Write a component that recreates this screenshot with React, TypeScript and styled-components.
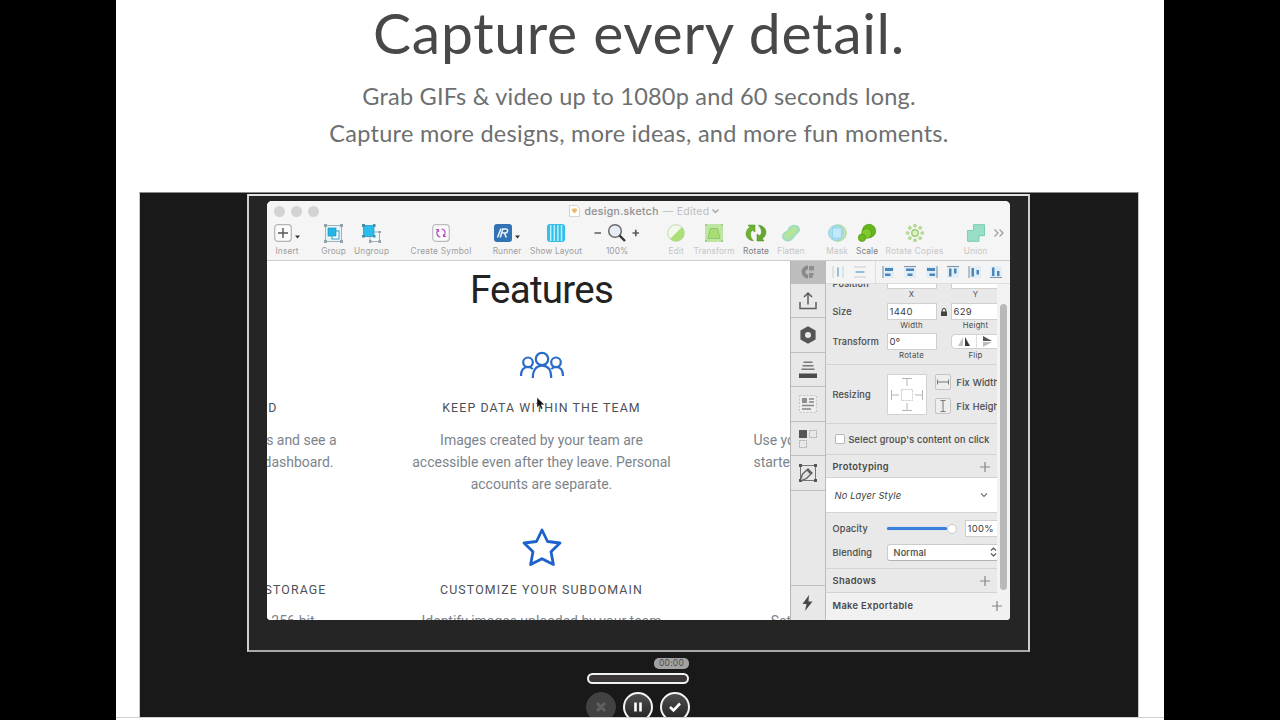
import React from "react";
import styled, { createGlobalStyle } from "styled-components";

const GlobalStyle = createGlobalStyle`
  * { box-sizing: border-box; }
  body { margin: 0; background: #000; overflow: hidden; }
  svg { display: block; flex: none; overflow: visible; }
`;

/* ---------- page ---------- */

const Page = styled.div`
  height: 720px;
  width: 1280px;
  display: flex;
  justify-content: center;
  background: #000;
`;
const Stage = styled.main`
  width: 1048px;
  height: 720px;
  overflow: hidden;
  background: #fff;
  display: flex;
  flex-direction: column;
`;
const Hero = styled.header`
  height: 192px;
  flex: none;
  padding-right: 2px;
  text-align: center;
  font-family: Lato, "Liberation Sans", sans-serif;
  white-space: nowrap;
`;
const Headline = styled.h1`
  margin: 0;
  height: 78px;
  font-size: 57px;
  line-height: 64px;
  font-weight: 400;
  letter-spacing: 0.7px;
  color: #484848;
`;
const Lead = styled.p<{ $track: number }>`
  margin: 0;
  font-size: 23.5px;
  line-height: 37px;
  letter-spacing: ${(p) => p.$track}px;
  color: #6d6f70;
`;
const Band = styled.div`
  height: 526px;
  flex: none;
  padding-right: 2px;
  border-bottom: 1px solid #cfcfcf;
  display: flex;
  justify-content: center;
`;
const Recorder = styled.section`
  width: 1000px;
  height: 525px;
  padding-right: 2px;
  flex: none;
  overflow: hidden;
  background: #191919;
  border: 1px solid #c8c8c8;
  border-top: 1px solid #8a8a8a;
  border-bottom: 0;
  display: flex;
  flex-direction: column;
  align-items: center;
`;
const CaptureFrame = styled.div`
  width: 783px;
  height: 458px;
  margin-top: 1px;
  flex: none;
  border: 2px solid #cfcfcf;
  border-top-color: #e4e4e4;
  border-bottom-color: #a8a8a8;
  background: #252525;
  padding: 5px 18px;
`;
const AppWindow = styled.div`
  width: 743px;
  height: 419px;
  border-radius: 5px 5px 4px 4px;
  overflow: hidden;
  background: #fff;
  display: flex;
  flex-direction: column;
  font-family: Inter, "Liberation Sans", sans-serif;
  white-space: nowrap;
`;

/* ---------- window chrome ---------- */

const Chrome = styled.div`
  height: 60px;
  flex: none;
  background: #f5f5f5;
  border-bottom: 1px solid #cdcdcd;
`;
const TitleBar = styled.div`
  height: 20px;
  display: flex;
  align-items: center;
  padding-left: 7px;
`;
const Lights = styled.div`
  display: flex;
  gap: 6px;
  width: 295px;
`;
const Light = styled.i`
  width: 11px;
  height: 11px;
  border-radius: 50%;
  background: #d3d3d3;
`;
const FileName = styled.span`
  font-size: 10.5px;
  margin: 0 4px 0 5px;
  letter-spacing: 0.4px;
  color: #8e8e8e;
  -webkit-text-stroke: 0.2px #8e8e8e;
`;
const Edited = styled.span`
  font-size: 10.5px;
  color: #bdbdbd;
  letter-spacing: 0.25px;
  margin-right: 3px;
`;
const Tools = styled.div`
  display: flex;
  height: 39px;
`;
const Tool = styled.div<{ $w: number; $gap: number; $dim?: boolean; $dark?: boolean }>`
  width: ${(p) => p.$w}px;
  margin-left: ${(p) => p.$gap}px;
  flex: none;
  display: flex;
  flex-direction: column;
  align-items: center;
  color: ${(p) => (p.$dim ? "#c6c6c6" : p.$dark ? "#7d7d7d" : "#9d9d9d")};
`;
const ToolIcon = styled.div`
  height: 24px;
  display: flex;
  align-items: center;
  justify-content: center;
  gap: 3px;
`;
const ToolLabel = styled.span<{ $track: number }>`
  font-size: 8.3px;
  line-height: 10px;
  margin-top: 0.6px;
  letter-spacing: ${(p) => p.$track}px;
`;

/* ---------- canvas ---------- */

const Workspace = styled.div`
  flex: 1;
  min-height: 0;
  display: flex;
`;
const Canvas = styled.div`
  width: 523px;
  height: 359px;
  overflow: hidden;
  background: #fff;
  display: grid;
  grid-template-columns: 101px 348px 74px;
  font-family: Roboto, "Liberation Sans", sans-serif;
  flex: none;
  position: relative;
`;
const Column = styled.div<{ $align: string; $pad?: number }>`
  display: flex;
  flex-direction: column;
  align-items: ${(p) => p.$align};
  padding-left: ${(p) => p.$pad ?? 0}px;
  min-width: 0;
`;
const FeatureTitle = styled.h2`
  margin: 0;
  font-weight: 400;
  font-size: 38.5px;
  line-height: 57px;
  height: 90px;
  letter-spacing: -0.75px;
  color: #222;
`;
const Glyph = styled.div<{ $h: number }>`
  height: ${(p) => p.$h}px;
  flex: none;
`;
const Caps = styled.h3<{ $shift?: number }>`
  margin: 0 ${(p) => p.$shift ?? 0}px 0 0;
  height: 20px;
  flex: none;
  font-weight: 400;
  font-size: 12.4px;
  line-height: 20px;
  letter-spacing: 1.1px;
  color: #4c5156;
`;
const Copy = styled.p<{ $shift?: number }>`
  margin: 0 ${(p) => p.$shift ?? 0}px 0 0;
  height: 22.4px;
  flex: none;
  font-size: 14px;
  line-height: 22.4px;
  letter-spacing: -0.02px;
  color: #7c848b;
`;
const Space = styled.div<{ $h: number }>`
  height: ${(p) => p.$h}px;
  flex: none;
`;
const Pointer = styled.div`
  position: absolute;
  left: 269px;
  top: 136px;
`;

/* ---------- icon rail ---------- */

const Rail = styled.div`
  width: 36px;
  flex: none;
  background: #e8e8e8;
  border-left: 1px solid #b5b5b5;
  border-right: 1px solid #bcbcbc;
  display: flex;
  flex-direction: column;
`;
const RailCell = styled.div<{ $h: number; $active?: boolean; $last?: boolean }>`
  height: ${(p) => p.$h}px;
  flex: none;
  display: flex;
  align-items: center;
  justify-content: center;
  background: ${(p) => (p.$active ? "#bdbdbd" : "transparent")};
  border-bottom: ${(p) => (p.$last ? "0" : "1px solid #bfbfbf")};
`;
const RailGap = styled.div`
  flex: 1;
  border-bottom: 1px solid #bfbfbf;
`;

/* ---------- inspector ---------- */

const Inspector = styled.div`
  flex: 1;
  min-width: 0;
  display: flex;
  flex-direction: column;
  background: #e9e9e9;
`;
const AlignBar = styled.div`
  height: 23px;
  flex: none;
  display: flex;
  align-items: center;
  padding-left: 6px;
  background: #f4f4f4;
  border-bottom: 1px solid #dcdcdc;
`;
const AlignSlot = styled.div<{ $w: number; $line?: boolean }>`
  width: ${(p) => p.$w}px;
  height: 100%;
  flex: none;
  display: flex;
  align-items: center;
  border-right: ${(p) => (p.$line ? "1px solid #dedede" : "0")};
`;
const ScrollArea = styled.div`
  height: 309px;
  flex: none;
  display: flex;
`;
const Fields = styled.div`
  width: 171px;
  overflow: hidden;
  flex: none;
`;
const Track = styled.div`
  flex: 1;
  background: #f3f3f3;
  padding: 20px 0 3px 3px;
  display: flex;
`;
const Thumb = styled.div`
  width: 7px;
  border-radius: 4px;
  background: #b9b9b9;
`;
const Group = styled.div<{ $h: number; $white?: boolean }>`
  height: ${(p) => p.$h}px;
  width: 190px;
  background: ${(p) => (p.$white ? "#fff" : "transparent")};
  border-bottom: 1px solid #d3d3d3;
`;
const Row = styled.div<{ $h: number; $end?: boolean }>`
  height: ${(p) => p.$h}px;
  display: flex;
  align-items: ${(p) => (p.$end ? "flex-end" : "center")};
  padding-left: 6px;
`;
const Label = styled.span<{ $w: number }>`
  width: ${(p) => p.$w}px;
  flex: none;
  padding-left: 1px;
  font-size: 9.2px;
  letter-spacing: 0.22px;
  color: #484848;
  -webkit-text-stroke: 0.2px #484848;
`;
const Field = styled.span<{ $w: number }>`
  width: ${(p) => p.$w}px;
  height: 17px;
  flex: none;
  background: #fff;
  border: 1px solid #cfcfcf;
  padding-left: 2px;
  font-size: 9.5px;
  line-height: 16px;
  letter-spacing: 0.3px;
  color: #3c3c3c;
`;
const Captions = styled.div<{ $h: number }>`
  height: ${(p) => p.$h}px;
  display: grid;
  grid-template-columns: 50px 50px;
  column-gap: 14px;
  padding-left: 61px;
  font-size: 7.8px;
  line-height: 11px;
  letter-spacing: 0.2px;
  text-align: center;
  color: #4a4a4a;
`;
const Lock = styled.span`
  width: 14px;
  display: flex;
  justify-content: center;
`;
const FlipButton = styled.span`
  width: 60px;
  height: 15px;
  border-radius: 4px;
  background: #fff;
  border: 1px solid #d0d0d0;
  display: flex;
  align-items: center;
  padding-left: 6px;
  gap: 6px;
`;
const FlipRule = styled.i`
  width: 1px;
  height: 13px;
  background: #ddd;
`;
const ResizeRow = styled.div`
  height: 58px;
  display: flex;
  align-items: center;
  padding-left: 6px;
`;
const ResizeBox = styled.div`
  width: 40px;
  height: 41px;
  background: #fff;
  border: 1px solid #d2d2d2;
`;
const FixList = styled.div`
  margin-left: 8px;
  display: flex;
  flex-direction: column;
  gap: 8px;
`;
const FixItem = styled.div`
  display: flex;
  align-items: center;
  height: 16px;
  gap: 5px;
`;
const FixIcon = styled.span`
  width: 16px;
  height: 16px;
  border: 1px solid #c4c4c4;
  border-radius: 2px;
  background: #eee;
`;
const Check = styled.span`
  width: 10px;
  height: 10px;
  margin: 0 3px 0 3px;
  background: #fff;
  border: 1px solid #b5b5b5;
  border-radius: 2px;
`;
const Heading = styled.span<{ $w: number }>`
  width: ${(p) => p.$w}px;
  flex: none;
  padding-left: 1px;
  font-size: 9.3px;
  font-weight: 600;
  letter-spacing: 0.35px;
  color: #484848;
`;
const LayerStyle = styled.span`
  width: 148px;
  padding-left: 3px;
  font-size: 9.3px;
  font-style: italic;
  letter-spacing: 0.15px;
  color: #3e3e3e;
`;
const Slider = styled.div`
  width: 70px;
  display: flex;
  align-items: center;
  margin-right: 8px;
`;
const SliderBar = styled.i`
  width: 60px;
  height: 2.6px;
  border-radius: 2px;
  background: #3b7fdb;
  box-shadow: 0 0 1px #6fb0f5;
`;
const Knob = styled.i`
  width: 10px;
  height: 10px;
  border-radius: 50%;
  background: #fff;
  border: 1px solid #c9c9c9;
`;
const Select = styled.div`
  width: 112px;
  height: 17px;
  border-radius: 3px;
  background: #fff;
  border: 1px solid #cbcbcb;
  border-bottom-color: #b4b4b4;
  display: flex;
  align-items: center;
  padding-left: 5px;
`;
const ExportRow = styled.div`
  flex: 1;
  display: flex;
  align-items: center;
  padding: 0 0 2px 6px;
  background: #f1f1f1;
`;

/* ---------- recorder controls ---------- */

const Controls = styled.div`
  width: 102px;
  display: flex;
  flex-direction: column;
  align-items: flex-end;
  padding-top: 6px;
`;
const Timer = styled.span`
  width: 35px;
  height: 11px;
  border-radius: 5px;
  background: #a2a2a2;
  color: #4e4e4e;
  font: 8.5px/11px Inter, sans-serif;
  letter-spacing: 0.2px;
  text-align: center;
`;
const Progress = styled.div`
  width: 102px;
  height: 11px;
  margin: 4px 0 8px;
  border: 2px solid #f1f1f1;
  border-radius: 6px;
  background: #3a3536;
  flex: none;
`;
const Buttons = styled.div`
  display: flex;
  gap: 7px;
  margin-right: -1px;
`;
const RoundButton = styled.div<{ $off?: boolean }>`
  width: 30px;
  height: 30px;
  flex: none;
  border-radius: 50%;
  border: ${(p) => (p.$off ? "1px solid #444" : "2px solid #f4f4f4")};
  background: ${(p) => (p.$off ? "#424242" : "linear-gradient(#4e4e4e, #232323)")};
  display: flex;
  align-items: center;
  justify-content: center;
`;

/* ---------- drawings ---------- */

const Caret = () => (
  <svg width="5" height="14" viewBox="0 0 5 14">
    <path d="M0 9.500h5L2.500 12.600z" fill="#333" />
  </svg>
);

const icons: Record<string, React.ReactNode> = {
  insert: (
    <>
      <svg width="18" height="18" viewBox="0 0 18 18">
        <rect x="0.7" y="0.7" width="16.6" height="16.6" rx="3" fill="#fbfbfb" stroke="#b4b4b4" strokeWidth="1.2" />
        <path d="M4 9h10M9 4v10" stroke="#555" strokeWidth="1.4" />
      </svg>
      <Caret />
    </>
  ),
  group: (
    <svg width="19" height="19" viewBox="0 0 19 19">
      <rect x="1.5" y="1.5" width="16" height="16" fill="#e6f4f8" stroke="#9fb0b8" />
      <rect x="8" y="7" width="7" height="8" fill="#f5fdff" stroke="#3ba0c8" />
      <rect x="4" y="4" width="8" height="8" fill="#25b5e4" stroke="#1590bd" strokeWidth="0.6" />
      <path d="M0 0h3v3H0zM16 0h3v3h-3zM0 16h3v3H0zM16 16h3v3h-3z" fill="#93a1a8" />
    </svg>
  ),
  ungroup: (
    <svg width="19" height="19" viewBox="0 0 19 19">
      <rect x="8" y="8" width="9.5" height="9.5" fill="#f1f8fa" stroke="#a5afb5" />
      <path d="M7 16h2.5v3H7zM16.500 16H19v3h-2.500zM16.500 7H19v2h-2.500z" fill="#93a1a8" />
      <rect x="1.5" y="1.500" width="10.500" height="11" fill="#2cbce9" stroke="#1d9cc8" strokeWidth="0.800" />
      <path d="M0 0h3v3H0zM11 0h2.500v3H11zM0 11h3v2.500H0zM11 11h2.500v2.500H11z" fill="#4b8da6" />
    </svg>
  ),
  symbol: (
    <svg width="18" height="18" viewBox="0 0 18 18">
      <rect x="0.7" y="0.7" width="16.600" height="16.600" rx="3" fill="#fbfbfb" stroke="#bcbcbc" strokeWidth="1.200" />
      <path d="M8.500 13C4.500 12.500 4 8 6 5.500M3.800 5.500h2.700V8M9.500 5c4 .5 4.500 5 2.500 7.500M14.200 12.500h-2.700V10" fill="none" stroke="#bb52c4" strokeWidth="1.200" />
    </svg>
  ),
  runner: (
    <>
      <svg width="18" height="18" viewBox="0 0 18 18">
        <rect width="18" height="18" rx="3" fill="#3173b4" />
        <path d="M3.500 13.500L7 4.500M6.300 13.500L8.800 5H12c2.600 0 2 4-.8 4H8.500M10.500 9l1.800 4.500" fill="none" stroke="#eef5fc" strokeWidth="1.500" />
      </svg>
      <Caret />
    </>
  ),
  layout: (
    <svg width="18" height="18" viewBox="0 0 18 18">
      <rect width="18" height="18" rx="3" fill="#35bfe6" />
      <path d="M3.700 1v16M7.300 1v16M10.900 1v16M14.500 1v16" stroke="#b9efff" strokeWidth="1.500" />
    </svg>
  ),
  zoom: (
    <svg width="46" height="18" viewBox="0 0 46 18">
      <path d="M0.500 9h6.500M38.500 9h6.500M41.800 5.800v6.400" stroke="#5c5c5c" strokeWidth="1.700" />
      <circle cx="21" cy="7" r="6.300" fill="#e7edf8" stroke="#6b6b6b" strokeWidth="1.500" />
      <path d="M25.500 11.500l5.500 5.500" stroke="#333" strokeWidth="2.400" />
    </svg>
  ),
  edit: (
    <svg width="18" height="18" viewBox="0 0 18 18">
      <circle cx="9" cy="9" r="8.300" fill="#f2f8ea" stroke="#c3d9b4" />
      <path d="M15 3A8.400 8.400 0 0 1 3 15z" fill="#abdf78" />
    </svg>
  ),
  transform: (
    <svg width="18" height="18" viewBox="0 0 18 18">
      <rect width="18" height="18" rx="1" fill="#bfe6a0" />
      <path d="M5.500 4.500h7l2.500 10H3z" fill="#a9dc72" stroke="#8fc672" />
      <path d="M0 0h2v2H0zM16 0h2v2h-2zM0 16h2v2H0zM16 16h2v2h-2z" fill="#a5c897" />
    </svg>
  ),
  rotate: (
    <svg width="22" height="18" viewBox="0 0 22 18">
      <path d="M3 1h7v7L7.400 6.200C4.500 8.500 5 13 8.500 16.800 1.500 16.500-2 8.500 4.600 3.200z" fill="#6fb22f" stroke="#4f9527" strokeWidth="0.500" />
      <path d="M19 17h-7v-7l2.600 1.800C17.500 9.500 17 5 13.500 1.200c7 .3 10.500 8.300 3.900 13.600z" fill="#62a82d" stroke="#4a8c23" strokeWidth="0.500" />
    </svg>
  ),
  flatten: (
    <svg width="18" height="18" viewBox="0 0 18 18">
      <path d="M6 5.500C8 0 17 0 17.500 5c.3 3-2 4-4 6-2 3-4 6.500-8.500 6-5-.5-6-6-2.500-8.500C4.500 7.500 5.500 7 6 5.500z" fill="#a3dfc0" stroke="#88cfa9" strokeWidth="0.600" />
      <path d="M5 12.500C5.500 8 11 10.500 12.500 5" fill="none" stroke="#b9e58f" strokeWidth="4.500" strokeLinecap="round" />
    </svg>
  ),
  mask: (
    <svg width="19" height="18" viewBox="0 0 19 18">
      <circle cx="10" cy="9" r="8.300" fill="#bfe6b1" stroke="#9fd491" strokeWidth="0.800" />
      <circle cx="8" cy="9" r="7.600" fill="#a7dcf0" fillOpacity="0.850" stroke="#8ecde5" strokeWidth="0.700" />
      <rect x="4.500" y="4" width="9" height="10" fill="#c0e9fb" stroke="#84c8e6" strokeWidth="0.600" />
    </svg>
  ),
  scale: (
    <svg width="18" height="18" viewBox="0 0 18 18">
      <circle cx="11" cy="7" r="6.700" fill="#67b51c" stroke="#4c9612" strokeWidth="0.700" />
      <circle cx="8.500" cy="9.500" r="4.900" fill="#7fca2c" stroke="#4f9a14" strokeWidth="0.700" />
      <circle cx="4" cy="13.800" r="3.700" fill="#6cbb20" stroke="#4f9a14" strokeWidth="0.700" />
    </svg>
  ),
  copies: (
    <svg width="18" height="18" viewBox="0 0 18 18">
      <circle cx="9" cy="9" r="3.200" fill="#dff2c6" stroke="#9ccb72" strokeWidth="1.400" />
      {[0, 45, 90, 135, 180, 225, 270, 315].map((a) => (
        <circle key={a} cx="9" cy="1.700" r="1.600" fill="#b5dd8f" stroke="#9ccb72" strokeWidth="0.400" transform={`rotate(${a} 9 9)`} />
      ))}
    </svg>
  ),
  union: (
    <svg width="18" height="18" viewBox="0 0 18 18">
      <path d="M6.500 0.700h11v11h-5.500v5.600H0.600V6.500h5.900z" fill="#97dfc6" stroke="#78ceb2" />
    </svg>
  ),
};

type ToolSpec = [icon: string, label: string, w: number, gap: number, tone: string, track: number];
const tools: ToolSpec[] = [
  ["insert", "Insert", 28, 6.6, "", 0.15],
  ["group", "Group", 30, 17.5, "", 0.1],
  ["ungroup", "Ungroup", 40, 3, "", 0.15],
  ["symbol", "Create Symbol", 66, 16.5, "", 0.25],
  ["runner", "Runner", 32, 17, "", 0.15],
  ["layout", "Show Layout", 56, 5, "", 0.15],
  ["zoom", "100%", 48, 9, "", 0.1],
  ["edit", "Edit", 20, 25, "dim", 0.15],
  ["transform", "Transform", 44, 6, "dim", 0.1],
  ["rotate", "Rotate", 32, 4, "dark", 0.15],
  ["flatten", "Flatten", 32, 3, "dim", 0.15],
  ["mask", "Mask", 24, 18, "dim", 0.15],
  ["scale", "Scale", 26, 5, "dark", 0.1],
  ["copies", "Rotate Copies", 62, 3.5, "dim", 0.25],
  ["union", "Union", 28, 16, "dim", 0.1],
];

const alignShapes: [string, string, number][] = [
  ["M1 0v12", "M3 2h8v3H3zM3 7.500h5.500v2.500H3z", 22],
  ["M0 0.500h12", "M2 2.500h8v2.500H2zM3.500 7.500h5v2.500h-5z", 22],
  ["M11 0v12", "M1 2h8v3H1zM3.500 7.500h5.500v2.500H3.500z", 21],
  ["M0 0.500h12", "M2 2.500h2.500v8H2zM7 2.500h2.500v5H7z", 21.5],
  ["M0 0v12", "M2.500 2h2.500v8.500H2.500zM7.500 4h2.500v4.500H7.500z", 21.5],
  ["M0 11.500h12", "M2 1.500h2.500v8.500H2zM7 5h2.500v5H7z", 14],
];

const Plus = () => (
  <svg width="10" height="10" viewBox="0 0 10 10">
    <path d="M0 5h10M5 0v10" stroke="#858585" strokeWidth="1.200" />
  </svg>
);

const rail: [number, React.ReactNode][] = [
  [34, (
    <svg width="18" height="18" viewBox="0 0 18 18" fill="none" stroke="#5c5c5c" strokeWidth="1.500">
      <path d="M1 10v6.500h16V10M9 12.500V1M5 5l4-4 4 4" />
    </svg>
  )],
  [35, (
    <svg width="18" height="18" viewBox="0 0 18 18">
      <path d="M9 0.300l7.600 4.300v8.800L9 17.700 1.400 13.400V4.600zM9 6a3 3 0 1 0 0 6 3 3 0 0 0 0-6z" fill="#555" fillRule="evenodd" />
    </svg>
  )],
  [34, (
    <svg width="18" height="18" viewBox="0 0 18 18">
      <path d="M4.500 1.200h9M3.500 4.700h11M2.500 8.200h13" stroke="#777" strokeWidth="1.500" />
      <rect y="12.500" width="18" height="4.500" fill="#4a4a4a" />
    </svg>
  )],
  [35, (
    <svg width="18" height="18" viewBox="0 0 18 18">
      <rect x="0.500" y="0.500" width="17" height="17" fill="#ededed" stroke="#c4c4c4" strokeDasharray="2 1.500" />
      <path d="M3 3h5v5H3z" fill="#8e8e8e" />
      <path d="M10 4h5M10 7h5M3 10.500h12M3 14h9" stroke="#888" strokeWidth="1.300" />
    </svg>
  )],
  [34, (
    <svg width="18" height="18" viewBox="0 0 18 18">
      <rect width="8" height="8" fill="#555" />
      <path d="M10.500 0.500h7v7h-7zM0.500 10.500h7v7h-7z" fill="none" stroke="#aaa" strokeDasharray="2 1" />
    </svg>
  )],
  [35, (
    <svg width="18" height="18" viewBox="0 0 18 18">
      <path d="M1.500 1.500h15v15h-15z" fill="none" stroke="#777" />
      <path d="M0 0h3v3H0zM15 0h3v3h-3zM0 15h3v3H0zM15 15h3v3h-3z" fill="#555" />
      <path d="M1 17l2.500-7 5.500-5 4 4-5.500 5.500z M8 6l4 4" fill="#e0e0e0" stroke="#5c5c5c" strokeWidth="1.300" />
    </svg>
  )],
];

export default function App() {
  return (
    <Page>
      <GlobalStyle />
      <Stage>
        <Hero>
          <Headline>Capture every detail.</Headline>
          <Lead $track={0.2}>Grab GIFs &amp; video up to 1080p and 60 seconds long.</Lead>
          <Lead $track={0.27}>Capture more designs, more ideas, and more fun moments.</Lead>
        </Hero>
        <Band>
          <Recorder>
            <CaptureFrame>
              <AppWindow>
                <Chrome>
                  <TitleBar>
                    <Lights>
                      <Light />
                      <Light />
                      <Light />
                    </Lights>
                    <svg width="11" height="12" viewBox="0 0 11 12">
                      <path d="M0.500 0.500h7l3 3v8h-10z" fill="#fff" stroke="#d5d5d5" />
                      <path d="M2.500 5l1.500-1.500h3L8.500 5l-3 3.500z" fill="#e9b765" />
                    </svg>
                    <FileName>design.sketch</FileName>
                    <Edited>— Edited</Edited>
                    <svg width="7" height="5" viewBox="0 0 7 5">
                      <path d="M0.500 0.500l3 3 3-3" fill="none" stroke="#a5a5a5" strokeWidth="1.300" />
                    </svg>
                  </TitleBar>
                  <Tools>
                    {tools.map(([icon, label, w, gap, tone, track]) => (
                      <Tool key={label} $w={w} $gap={gap} $dim={tone === "dim"} $dark={tone === "dark"}>
                        <ToolIcon>{icons[icon]}</ToolIcon>
                        <ToolLabel $track={track}>{label}</ToolLabel>
                      </Tool>
                    ))}
                    <Tool $w={11} $gap={4}>
                      <ToolIcon>
                        <svg width="10" height="8" viewBox="0 0 10 8">
                          <path d="M0.500 0.500L4 4 0.500 7.500M5.500 0.500L9 4 5.500 7.500" fill="none" stroke="#9a9a9a" strokeWidth="1.200" />
                        </svg>
                      </ToolIcon>
                    </Tool>
                  </Tools>
                </Chrome>
                <Workspace>
                  <Canvas>
                    <Column $align="flex-end">
                      <Space $h={137} />
                      <Caps $shift={90}>D</Caps>
                      <Space $h={10.500} />
                      <Copy $shift={31}>s and see a</Copy>
                      <Copy $shift={34}>dashboard.</Copy>
                      <Space $h={106.500} />
                      <Caps $shift={41}>STORAGE</Caps>
                      <Space $h={10} />
                      <Copy $shift={53}>256-bit</Copy>
                    </Column>
                    <Column $align="center">
                      <FeatureTitle>Features</FeatureTitle>
                      <Glyph $h={47}>
                        <svg width="44" height="28" viewBox="0 0 44 28" fill="none" stroke="#2a6cc8" strokeWidth="2.200">
                          <circle cx="22" cy="8" r="6.200" />
                          <circle cx="8" cy="11.300" r="4.800" />
                          <circle cx="36" cy="11.300" r="4.800" />
                          <path d="M12.800 27c0-8 3.500-12.300 9.200-12.300S31.200 19 31.200 27M1 25c0-5.500 2.500-9 7-9 2 0 3.700.7 4.800 2.200M43 25c0-5.500-2.500-9-7-9-2 0-3.700.7-4.800 2.200" />
                        </svg>
                      </Glyph>
                      <Caps>KEEP DATA WITHIN THE TEAM</Caps>
                      <Space $h={10.500} />
                      <Copy>Images created by your team are</Copy>
                      <Copy>accessible even after they leave. Personal</Copy>
                      <Copy>accounts are separate.</Copy>
                      <Space $h={32} />
                      <Glyph $h={52}>
                        <svg width="40" height="39" viewBox="0 0 40 39">
                          <path d="M20 2l5.500 11.500 12.500 1.500-9 8.700 2.400 12.800L20 30.700 8.600 36.500 11 23.700 2 15l12.500-1.500z" fill="none" stroke="#1d62cc" strokeWidth="2.800" strokeLinejoin="round" />
                        </svg>
                      </Glyph>
                      <Caps>CUSTOMIZE YOUR SUBDOMAIN</Caps>
                      <Space $h={10} />
                      <Copy>Identify images uploaded by your team</Copy>
                    </Column>
                    <Column $align="flex-start" $pad={38}>
                      <Space $h={167.500} />
                      <Copy>Use your</Copy>
                      <Copy>started</Copy>
                      <Space $h={136.500} />
                      <Copy>&nbsp;&nbsp;&nbsp;&nbsp;&nbsp;Set</Copy>
                    </Column>
                    <Pointer>
                      <svg width="9" height="13" viewBox="0 0 9 13">
                        <path d="M1 0.500v10l2.300-2 1.700 3.800 1.800-.8-1.700-3.700H8.500z" fill="#111" stroke="#fff" strokeWidth="0.400" />
                      </svg>
                    </Pointer>
                  </Canvas>
                  <Rail>
                    <RailCell $h={23} $active>
                      <svg width="14" height="14" viewBox="0 0 14 14">
                        <path d="M7 2.500a4.500 4.500 0 1 0 0 9" fill="none" stroke="#8a8a8a" strokeWidth="4" />
                        <path d="M8 1h5v4.500H8zM8 8h5l-2 5H8z" fill="#8e8e8e" />
                      </svg>
                    </RailCell>
                    {rail.map(([h, icon], i) => (
                      <RailCell key={i} $h={h}>{icon}</RailCell>
                    ))}
                    <RailGap />
                    <RailCell $h={34} $last>
                      <svg width="11" height="16" viewBox="0 0 11 16">
                        <path d="M7 0L0.500 9h4L3 16l7.500-9.500h-4z" fill="#484848" />
                      </svg>
                    </RailCell>
                  </Rail>
                  <Inspector>
                    <AlignBar>
                      <AlignSlot $w={22}>
                        <svg width="12" height="12" viewBox="0 0 12 12">
                          <path d="M1 0v12M11 0v12" stroke="#c9d0d6" />
                          <path d="M6 1.500v9" stroke="#8fc1de" strokeWidth="2" />
                        </svg>
                      </AlignSlot>
                      <AlignSlot $w={22} $line>
                        <svg width="12" height="12" viewBox="0 0 12 12">
                          <path d="M0 1h12M0 11h12" stroke="#c9d0d6" />
                          <path d="M1.500 6h9" stroke="#8fc1de" strokeWidth="2" />
                        </svg>
                      </AlignSlot>
                      <AlignSlot $w={6.500} />
                      {alignShapes.map(([line, bars, w], i) => (
                        <AlignSlot key={i} $w={w}>
                          <svg width="12" height="12" viewBox="0 0 12 12">
                            <rect width="12" height="12" fill="#e2eef6" />
                            <path d={line} stroke="#8498a8" strokeWidth="1.100" />
                            <path d={bars} fill="#4a86b9" />
                          </svg>
                        </AlignSlot>
                      ))}
                    </AlignBar>
                    <ScrollArea>
                      <Fields>
                        <Group $h={81}>
                          <Row $h={5} $end>
                            <Label $w={55}>Position</Label>
                            <Field $w={50}>0</Field>
                            <Lock />
                            <Field $w={60}>740</Field>
                          </Row>
                          <Captions $h={14}>
                            <span>X</span>
                            <span>Y</span>
                          </Captions>
                          <Row $h={17}>
                            <Label $w={55}>Size</Label>
                            <Field $w={50}>1440</Field>
                            <Lock>
                              <svg width="6" height="8" viewBox="0 0 6 8">
                                <rect y="3.500" width="6" height="4.500" fill="#444" />
                                <path d="M1.200 4V2.200a1.800 1.800 0 0 1 3.600 0V4" fill="none" stroke="#444" />
                              </svg>
                            </Lock>
                            <Field $w={60}>629</Field>
                          </Row>
                          <Captions $h={13}>
                            <span>Width</span>
                            <span>Height</span>
                          </Captions>
                          <Row $h={17}>
                            <Label $w={55}>Transform</Label>
                            <Field $w={50}>0º</Field>
                            <Lock />
                            <FlipButton>
                              <svg width="12" height="9" viewBox="0 0 12 9">
                                <path d="M5 0v9H0z" fill="#c4c4c4" />
                                <path d="M7 0v9h5z" fill="#3a3a3a" />
                              </svg>
                              <FlipRule />
                              <svg width="9" height="11" viewBox="0 0 9 11">
                                <path d="M0 0v5h9z" fill="#555" />
                                <path d="M0 6v5l9-5z" fill="#bbb" />
                              </svg>
                            </FlipButton>
                          </Row>
                          <Captions $h={14}>
                            <span>Rotate</span>
                            <span>Flip</span>
                          </Captions>
                        </Group>
                        <Group $h={59}>
                          <ResizeRow>
                            <Label $w={55}>Resizing</Label>
                            <ResizeBox>
                              <svg width="38" height="39" viewBox="0 0 38 39" fill="none" stroke="#b5b5b5">
                                <rect x="13.500" y="14.500" width="11" height="11" stroke="#c9c9c9" strokeDasharray="2 1" />
                                <path d="M14 3.500h10M19 4v7M14 35.500h10M19 35v-7M3.500 15v10M4 20h7M34.500 15v10M34 20h-7" />
                              </svg>
                            </ResizeBox>
                            <FixList>
                              <FixItem>
                                <FixIcon>
                                  <svg width="14" height="14" viewBox="0 0 14 14">
                                    <path d="M1.500 4.500v5M12.500 4.500v5M2 7h10" stroke="#777" />
                                  </svg>
                                </FixIcon>
                                <Label $w={50}>Fix Width</Label>
                              </FixItem>
                              <FixItem>
                                <FixIcon>
                                  <svg width="14" height="14" viewBox="0 0 14 14">
                                    <path d="M4.500 1.500h5M4.500 12.500h5M7 2v10" stroke="#777" />
                                  </svg>
                                </FixIcon>
                                <Label $w={50}>Fix Height</Label>
                              </FixItem>
                            </FixList>
                          </ResizeRow>
                        </Group>
                        <Group $h={31}>
                          <Row $h={30}>
                            <Check />
                            <Label $w={150}>Select group's content on click</Label>
                          </Row>
                        </Group>
                        <Group $h={23}>
                          <Row $h={23}>
                            <Heading $w={148}>Prototyping</Heading>
                            <Plus />
                          </Row>
                        </Group>
                        <Group $h={35} $white>
                          <Row $h={34}>
                            <LayerStyle>No Layer Style</LayerStyle>
                            <svg width="8" height="5" viewBox="0 0 8 5">
                              <path d="M1 0.500l3 3 3-3" fill="none" stroke="#777" strokeWidth="1.200" />
                            </svg>
                          </Row>
                        </Group>
                        <Group $h={56}>
                          <Space $h={5} />
                          <Row $h={21}>
                            <Label $w={55}>Opacity</Label>
                            <Slider>
                              <SliderBar />
                              <Knob />
                            </Slider>
                            <Field $w={40}>100%</Field>
                          </Row>
                          <Row $h={26}>
                            <Label $w={55}>Blending</Label>
                            <Select>
                              <Label $w={97}>Normal</Label>
                              <svg width="7" height="10" viewBox="0 0 7 10">
                                <path d="M1 3.500l2.500-2.500L6 3.500M1 6.500L3.500 9 6 6.500" fill="none" stroke="#555" strokeWidth="1.200" />
                              </svg>
                            </Select>
                          </Row>
                        </Group>
                        <Group $h={24}>
                          <Row $h={23}>
                            <Heading $w={148}>Shadows</Heading>
                            <Plus />
                          </Row>
                        </Group>
                      </Fields>
                      <Track>
                        <Thumb />
                      </Track>
                    </ScrollArea>
                    <ExportRow>
                      <Heading $w={160}>Make Exportable</Heading>
                      <Plus />
                    </ExportRow>
                  </Inspector>
                </Workspace>
              </AppWindow>
            </CaptureFrame>
            <Controls>
              <Timer>00:00</Timer>
              <Progress />
              <Buttons>
                <RoundButton $off>
                  <svg width="12" height="12" viewBox="0 0 12 12">
                    <path d="M2 2l8 8M10 2l-8 8" stroke="#606060" strokeWidth="3" />
                  </svg>
                </RoundButton>
                <RoundButton>
                  <svg width="10" height="10" viewBox="0 0 10 10">
                    <path d="M2.500 0.500v9M7.500 0.500v9" stroke="#fff" strokeWidth="2.600" />
                  </svg>
                </RoundButton>
                <RoundButton>
                  <svg width="12" height="10" viewBox="0 0 12 10">
                    <path d="M1 5l3.500 3.300L11 1.500" fill="none" stroke="#fff" strokeWidth="2.600" />
                  </svg>
                </RoundButton>
              </Buttons>
            </Controls>
          </Recorder>
        </Band>
      </Stage>
    </Page>
  );
}
